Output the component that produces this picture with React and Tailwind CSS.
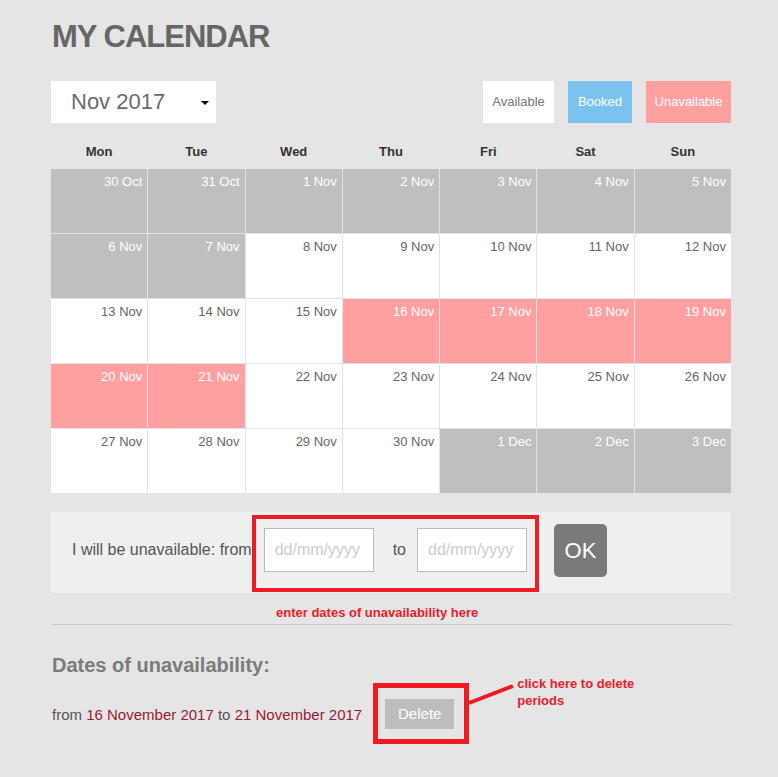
import React from "react";

const G = "gray";
const P = "pink";
const W = "white";

const weeks = [
  [["30 Oct", G], ["31 Oct", G], ["1 Nov", G], ["2 Nov", G], ["3 Nov", G], ["4 Nov", G], ["5 Nov", G]],
  [["6 Nov", G], ["7 Nov", G], ["8 Nov", W], ["9 Nov", W], ["10 Nov", W], ["11 Nov", W], ["12 Nov", W]],
  [["13 Nov", W], ["14 Nov", W], ["15 Nov", W], ["16 Nov", P], ["17 Nov", P], ["18 Nov", P], ["19 Nov", P]],
  [["20 Nov", P], ["21 Nov", P], ["22 Nov", W], ["23 Nov", W], ["24 Nov", W], ["25 Nov", W], ["26 Nov", W]],
  [["27 Nov", W], ["28 Nov", W], ["29 Nov", W], ["30 Nov", W], ["1 Dec", G], ["2 Dec", G], ["3 Dec", G]],
];

const days = ["Mon", "Tue", "Wed", "Thu", "Fri", "Sat", "Sun"];

function DayCell({ label, kind }) {
  const tone =
    kind === G
      ? "bg-[#bfbfbf] text-white"
      : kind === P
      ? "bg-[#ff9f9f] text-white"
      : "bg-white text-[#666666]";
  return (
    <div className={`h-[64px] pt-[5px] pr-[5px] text-right text-[13px] leading-[15px] ${tone}`}>
      {label}
    </div>
  );
}

export default function App() {
  return (
    <div className="min-h-[777px] w-full bg-[#e5e5e5] font-['Liberation_Sans',Arial,sans-serif]">
      <div className="ml-[51px] w-[680px] pt-[21px] pb-[40px]">
        <h1 className="text-[31px] leading-[32px] font-bold tracking-[-1px] text-[#666666] pl-px">
          MY CALENDAR
        </h1>

        {/* month picker + legend */}
        <div className="mt-[28px] flex items-start justify-between">
          <div className="relative flex h-[42px] w-[165px] items-center bg-white pl-[20px]">
            <span className="text-[22px] leading-none text-[#6b6b6b]">Nov 2017</span>
            <span className="absolute right-[7px] top-[20px] h-0 w-0 border-x-[4px] border-t-[4px] border-x-transparent border-t-black" />
          </div>
          <div className="flex gap-[14px] text-[13px]">
            <div className="flex h-[42px] w-[71px] items-center justify-center bg-white text-[#777777]">
              Available
            </div>
            <div className="flex h-[42px] w-[64px] items-center justify-center bg-[#7bc3ef] text-white">
              Booked
            </div>
            <div className="flex h-[42px] w-[85px] items-center justify-center bg-[#ff9f9f] text-white">
              Unavailable
            </div>
          </div>
        </div>

        {/* weekday header */}
        <div className="grid grid-cols-7 gap-px pt-[21px] pb-[9px]">
          {days.map((d) => (
            <div key={d} className="text-center text-[13px] leading-[16px] font-bold text-[#333333]">
              {d}
            </div>
          ))}
        </div>

        {/* month grid */}
        <div className="grid grid-cols-7 gap-px bg-[#e3e3e3]">
          {weeks.flat().map(([label, kind]) => (
            <DayCell key={label} label={label} kind={kind} />
          ))}
        </div>

        {/* unavailability form */}
        <div className="relative mt-[19px] flex h-[81px] items-center bg-[#efefef] pl-[21px] pb-[5px]">
          <span className="text-[16px] text-[#555555]">I will be unavailable: from</span>
          <input
            placeholder="dd/mm/yyyy"
            className="ml-[12px] h-[44px] w-[110px] border border-[#bbbbbb] bg-white px-[10px] text-[16px] text-[#555555] outline-none placeholder:text-[#cccccc]"
          />
          <span className="ml-[19px] text-[16px] text-[#555555]">to</span>
          <input
            placeholder="dd/mm/yyyy"
            className="ml-[11px] h-[44px] w-[110px] border border-[#bbbbbb] bg-white px-[10px] text-[16px] text-[#555555] outline-none placeholder:text-[#cccccc]"
          />
          <button className="ml-[27px] flex h-[53px] w-[53px] items-center justify-center rounded-[5px] bg-[#7a7a7a] text-[22px] text-white">
            OK
          </button>
          <div className="pointer-events-none absolute left-[201px] top-[3px] h-[77px] w-[287px] border-[4px] border-[#ed1c24]" />
        </div>

        <div className="mt-[12px] pl-[225px] text-[13px] leading-[16px] font-bold text-[#e8202a]">
          enter dates of unavailability here
        </div>

        <div className="mt-[3px] h-px bg-[#c8c8c8]" />

        <h2 className="mt-[28px] pl-px text-[20px] leading-[24px] font-bold text-[#7b7b7b]">
          Dates of unavailability:
        </h2>

        <div className="mt-[22px] flex items-center pl-px">
          <span className="text-[15px] leading-[17px] text-[#555555]">
            from <span className="text-[#9b1b30]">16 November 2017</span> to{" "}
            <span className="text-[#9b1b30]">21 November 2017</span>
          </span>
          <div className="relative ml-[23px]">
            <button className="flex h-[30px] w-[69px] items-center justify-center bg-[#bdbdbd] text-[15px] text-white">
              Delete
            </button>
            <div className="pointer-events-none absolute -left-[12px] -top-[16px] h-[61px] w-[96px] border-[5px] border-[#ed1c24]" />
            <svg
              className="pointer-events-none absolute left-[80px] top-[-18px]"
              width="52"
              height="28"
              viewBox="0 0 52 28"
            >
              <line x1="4" y1="22" x2="48" y2="5" stroke="#ed1c24" strokeWidth="4" />
            </svg>
            <div className="pointer-events-none absolute left-[132px] top-[-24px] w-[140px] text-[13px] leading-[17px] font-bold text-[#e8202a]">
              click here to delete
              <br />
              periods
            </div>
          </div>
        </div>
      </div>
    </div>
  );
}
